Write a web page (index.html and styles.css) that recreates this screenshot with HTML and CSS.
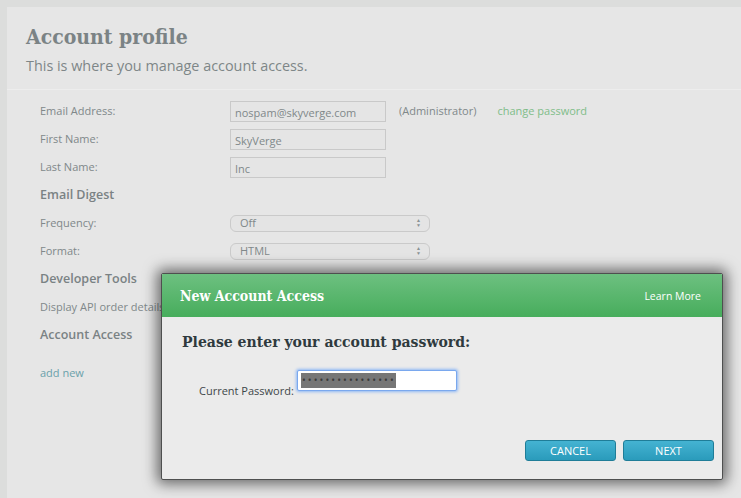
FILE: index.html
```html
<!DOCTYPE html>
<html>
<head>
<meta charset="utf-8">
<link rel="stylesheet" href="styles.css">
</head>
<body>
<div class="panel">
  <header class="page-head">
    <h1 class="title">Account profile</h1>
    <p class="subtitle">This is where you manage account access.</p>
  </header>
  <section class="form">
    <div class="row">
      <span class="label">Email Address:</span>
      <div class="field"><span class="input">nospam@skyverge.com</span><span class="role">(Administrator)</span><a class="green-link">change password</a></div>
    </div>
    <div class="row">
      <span class="label">First Name:</span>
      <div class="field"><span class="input">SkyVerge</span></div>
    </div>
    <div class="row">
      <span class="label">Last Name:</span>
      <div class="field"><span class="input">Inc</span></div>
    </div>
    <div class="row"><span class="section">Email Digest</span></div>
    <div class="row">
      <span class="label">Frequency:</span>
      <div class="field"><span class="select">Off<span class="arrows">▲<br>▼</span></span></div>
    </div>
    <div class="row">
      <span class="label">Format:</span>
      <div class="field"><span class="select">HTML<span class="arrows">▲<br>▼</span></span></div>
    </div>
    <div class="row"><span class="section">Developer Tools</span></div>
    <div class="row"><span class="label">Display API order details</span></div>
    <div class="row"><span class="section">Account Access</span></div>
    <div class="add-row"><a class="teal-link">add new</a></div>
  </section>
</div>

<div class="modal">
  <div class="modal-head">
    <span class="modal-title">New Account Access</span>
    <a class="learn">Learn More</a>
  </div>
  <div class="modal-body">
    <h2 class="prompt">Please enter your account password:</h2>
    <div class="pw-row">
      <span class="pw-label">Current Password:</span>
      <span class="pw-input"><span class="pw-sel">••••••••••••••••</span></span>
    </div>
    <div class="actions">
      <span class="btn">CANCEL</span>
      <span class="btn">NEXT</span>
    </div>
  </div>
</div>
</body>
</html>
```

FILE: styles.css
```css
* { box-sizing: border-box; }
html, body { margin: 0; padding: 0; }
body {
  width: 741px;
  height: 498px;
  overflow: hidden;
  background: #dcdddc;
  padding: 7px 0 0 7px;
  font-family: "Open Sans", "Noto Sans", sans-serif;
  position: relative;
}
.panel {
  background: #e6e6e6;
  height: 491px;
}
.page-head {
  padding: 17px 0 0 19px;
  height: 83px;
  border-bottom: 1px solid #ededed;
}
.title {
  margin: 0;
  font-family: "DejaVu Serif Condensed", "DejaVu Serif", serif;
  font-weight: bold;
  font-size: 21px;
  line-height: 26px;
  color: #7b8385;
}
.subtitle {
  margin: 7px 0 0 0;
  font-size: 14.4px;
  line-height: 18px;
  color: #7e8688;
}
.form {
  padding: 6px 0 0 33px;
}
.row {
  height: 28px;
  display: flex;
  align-items: center;
}
.label {
  width: 190px;
  font-size: 11px;
  color: #80888a;
  white-space: nowrap;
}
.section {
  font-size: 12.5px;
  font-weight: 600;
  color: #7a8284;
}
.field {
  display: flex;
  align-items: center;
}
.input {
  width: 156px;
  height: 21px;
  border: 1px solid #c9c9c9;
  background: #e5e5e5;
  font-size: 11px;
  color: #80888a;
  padding: 3px 0 0 4px;
  margin-top: 3px;
}
.role {
  margin-left: 13px;
  font-size: 11px;
  color: #80888a;
}
.green-link {
  margin-left: 21px;
  font-size: 11px;
  color: #80bd89;
}
.select {
  width: 200px;
  height: 17px;
  border: 1px solid #cacaca;
  border-radius: 6px;
  background: #e4e4e4;
  font-size: 11px;
  color: #80888a;
  padding: 0 0 0 9px;
  line-height: 14px;
  display: flex;
  justify-content: space-between;
  align-items: center;
  margin-top: 2px;
}
.arrows {
  font-size: 5px;
  line-height: 5px;
  color: #8a9294;
  margin-right: 8px;
  text-align: center;
}
.add-row {
  padding-top: 15px;
  height: 33px;
  display: flex;
  align-items: center;
}
.teal-link {
  font-size: 11px;
  color: #6aa1aa;
}

.modal {
  position: absolute;
  left: 161px;
  top: 273px;
  width: 562px;
  height: 207px;
  border: 1px solid #4e4f4f;
  border-radius: 2px;
  background: #ebebeb;
  box-shadow: 0 0 14px 4px rgba(0,0,0,0.55);
  overflow: hidden;
}
.modal-head {
  height: 43px;
  background: linear-gradient(#6dc080, #47ad5c);
  display: flex;
  align-items: center;
  justify-content: space-between;
  padding: 0 21px 0 18px;
}
.modal-title {
  font-family: "DejaVu Serif Condensed", "DejaVu Serif", serif;
  font-weight: bold;
  font-size: 14px;
  color: #ffffff;
  margin-top: 1px;
}
.learn {
  font-size: 10.5px;
  color: #ffffff;
}
.modal-body {
  padding: 15px 8px 0 20px;
}
.prompt {
  margin: 0;
  font-family: "DejaVu Serif Condensed", "DejaVu Serif", serif;
  font-weight: bold;
  font-size: 15.6px;
  line-height: 20px;
  color: #2f3a3e;
}
.pw-row {
  display: flex;
  align-items: flex-start;
  margin-top: 18px;
  padding-left: 17px;
}
.pw-label {
  font-size: 11px;
  color: #3e4749;
  margin-top: 13px;
  width: 98px;
}
.pw-input {
  width: 160px;
  height: 21px;
  background: #ffffff;
  border: 1px solid #7aa8ee;
  box-shadow: 0 0 3px 1px #8fb8f5;
  border-radius: 2px;
  padding: 2px 3px;
  display: flex;
}
.pw-sel {
  background: #767676;
  color: #3a3a3a;
  font-size: 10px;
  line-height: 15px;
  letter-spacing: 2.1px;
  padding: 0 0 0 1px;
  white-space: nowrap;
}
.actions {
  display: flex;
  justify-content: flex-end;
  gap: 7px;
  margin-top: 42px;
}
.btn {
  width: 91px;
  height: 21px;
  border: 1px solid #1f7d98;
  border-radius: 3px;
  background: linear-gradient(#45b3d2, #2a9bbb);
  color: #ffffff;
  font-size: 11px;
  display: flex;
  align-items: center;
  justify-content: center;
  font-family: "Liberation Sans Narrow", "Open Sans", sans-serif;
}
```
